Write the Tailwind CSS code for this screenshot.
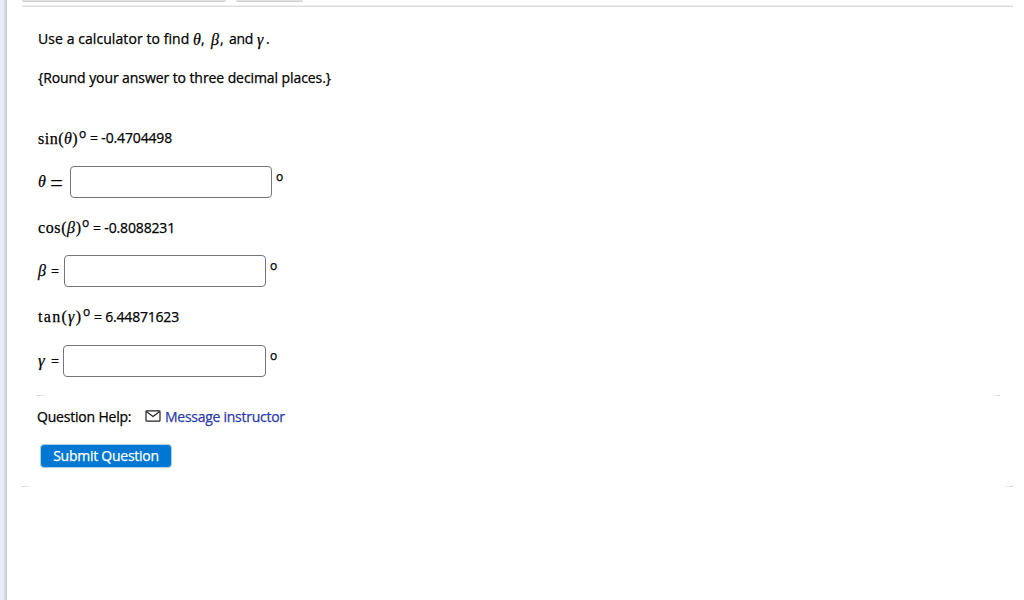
<!DOCTYPE html>
<html lang="en">
<head>
    <meta charset="utf-8">
    <title>Question</title>
    <script src="https://cdn.jsdelivr.net/npm/@tailwindcss/browser@4"></script>
</head>
<body class="bg-white overflow-hidden">
<div class="flex h-[600px] font-['Open_Sans',sans-serif] text-[14px] leading-5 text-black whitespace-nowrap [-webkit-text-stroke:0.25px]">
    <div class="w-[7px] shrink-0 bg-linear-to-r from-[#ebebf8] from-45% to-[#c3c3c8]"></div>
    <div class="ml-[15px] w-[991px] flex flex-col">
        <div class="flex h-[5px] gap-2.5">
            <div class="h-0.5 w-[204px] rounded-b bg-[#e2e2e2] border-b border-[#cfcfcf]"></div>
            <div class="h-0.5 w-[67px] rounded-b bg-[#e2e2e2] border-b border-[#cfcfcf]"></div>
        </div>
        <div class="h-0.5 bg-[#dcdcdc] border-t border-[#efefef]"></div>
        <div class="px-4 pt-[22px]">
            <p class="flex h-5">
                <span class="w-[155px] tracking-[0.07px]">Use a calculator to find</span>
                <i class="w-2 -mt-px font-['Liberation_Serif',serif] text-base">θ</i><span class="w-[10px]">,</span>
                <i class="w-[9px] -mt-px font-['Liberation_Serif',serif] text-base">β</i><span class="w-[9px]">,</span>
                <span class="w-[28px] tracking-[-0.3px]">and</span>
                <i class="w-[9px] -mt-px font-['Liberation_Serif',serif] text-base">γ</i><span>.</span>
            </p>
            <p class="mt-[19px] h-5 tracking-[-0.08px]">{Round your answer to three decimal places.}</p>

            <div class="mt-10 flex h-5">
                <span class="w-[41px] -mt-[1.5px] font-['Liberation_Serif',serif] text-base tracking-[0.5px]">sin(<i>θ</i>)</span>
                <span class="w-[11px] -mt-1 text-[12px]">o</span>
                <span class="tracking-[-0.15px]">= -0.4704498</span>
            </div>
            <div class="mt-[18px] flex h-8 items-center">
                <label for="theta" class="flex w-8 font-['Liberation_Serif',serif] text-base"><i class="w-3 -mt-px">θ</i><span class="mt-[3px] text-[23px] leading-5 [-webkit-text-stroke:0]">=</span></label>
                <input id="theta" type="text" class="h-8 w-[202px] rounded border border-[#757575] outline-0">
                <span class="ml-1 -mt-2.5 text-[12px]">o</span>
            </div>

            <div class="mt-5 flex h-5">
                <span class="w-[44px] -mt-[2px] font-['Liberation_Serif',serif] text-base tracking-[0.6px]">cos(<i>β</i>)</span>
                <span class="w-[11px] -mt-[5px] text-[12px]">o</span>
                <span class="tracking-[-0.15px]">= -0.8088231</span>
            </div>
            <div class="mt-[17px] flex h-8 items-center">
                <label for="beta" class="mt-0.5 flex w-[26px]"><i class="w-[13px] -mt-0.5 font-['Liberation_Serif',serif] text-base">β</i>=</label>
                <input id="beta" type="text" class="h-8 w-[202px] rounded border border-[#757575] outline-0">
                <span class="ml-1 -mt-2.5 text-[12px]">o</span>
            </div>

            <div class="mt-5 flex h-5">
                <span class="w-[45px] -mt-[2px] font-['Liberation_Serif',serif] text-base tracking-[1.3px]">tan(<i>γ</i>)</span>
                <span class="w-[11px] -mt-[5px] text-[12px]">o</span>
                <span class="tracking-[-0.2px]">= 6.44871623</span>
            </div>
            <div class="mt-[18px] flex h-8 items-center">
                <label for="gamma" class="flex w-[25px]"><i class="w-[13px] font-['Liberation_Serif',serif] text-[17px] leading-5">γ</i>=</label>
                <input id="gamma" type="text" class="h-8 w-[203px] rounded border border-[#757575] outline-0">
                <span class="ml-1 -mt-2.5 text-[12px]">o</span>
            </div>

            <div class="-ml-px mt-[18px] flex h-px w-[963px] justify-between">
                <div class="w-2.5 bg-linear-to-r from-[#cfcfcf] to-white"></div>
                <div class="w-2.5 bg-linear-to-l from-[#cfcfcf] to-white"></div>
            </div>
            <div class="-ml-px mt-[11px] flex h-5 items-center">
                <span class="w-[108px] tracking-[-0.2px]">Question Help:</span>
                <svg class="mr-1 -mt-0.5 h-3 w-4" viewBox="0 0 16 12" fill="none" stroke="#222" stroke-width="1.2">
                    <rect x="1" y="0.8" width="14" height="10.4" rx="0.6" />
                    <path d="M1.3 1.4 8 6.4l6.7-5" />
                </svg>
                <a href="#" class="text-[#2b3ba8] tracking-[-0.27px]">Message instructor</a>
            </div>
            <button class="mt-[17px] ml-0.5 block h-6 w-[132px] rounded border border-[#b5cfe2] bg-[#0077d2] text-white tracking-[-0.25px]">Submit Question</button>
        </div>
        <div class="mt-[18px] flex h-px justify-between">
            <div class="w-2.5 bg-linear-to-r from-[#cfcfcf] to-white"></div>
            <div class="w-2.5 bg-linear-to-l from-[#cfcfcf] to-white"></div>
        </div>
    </div>
</div>
</body>
</html>
